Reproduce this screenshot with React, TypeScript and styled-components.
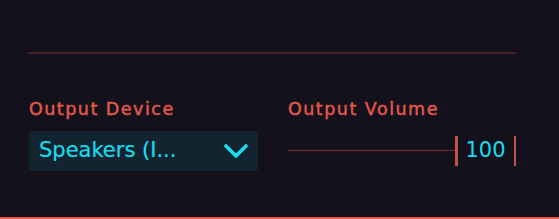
import styled, { createGlobalStyle } from 'styled-components';

const GlobalStyle = createGlobalStyle`
    html, body {
        margin: 0;
        padding: 0;
        background: #13121c;
    }
    body {
        font-family: 'DejaVu Sans', 'Open Sans', sans-serif;
    }
`
const Panel = styled.div`
    width: 559px;
    height: 219px;
    box-sizing: border-box;
    background: #13121c;
    border-bottom: 2px solid #e85a48;
    padding: 52px 43px 0 28px;
`
const Divider = styled.div`
    height: 1.5px;
    background: #4b1f26;
`
const Row = styled.div`
    display: grid;
    grid-template-columns: 229px 1fr;
    column-gap: 30px;
    margin-top: 42px;
    padding-left: 1px;
`
const Field = styled.div`
    display: flex;
    flex-direction: column;
    gap: 9px;
`
const Label = styled.div`
    font-size: 17.5px;
    font-weight: 400;
    color: #e5574a;
    line-height: 26px;
    letter-spacing: 1.5px;
    -webkit-text-stroke: 0.45px #e5574a;
`
const Select = styled.div`
    height: 40px;
    box-sizing: border-box;
    border-radius: 4px;
    background: #12242f;
    display: flex;
    align-items: center;
    justify-content: space-between;
    padding: 0 10px 0 10px;
    color: #19dcef;
    font-size: 21px;
`
const SelectText = styled.span`
    white-space: nowrap;
    line-height: 1;
    -webkit-text-stroke: 0.2px #19dcef;
`
const Slider = styled.div`
    height: 40px;
    display: flex;
    align-items: center;
`
const Track = styled.div`
    flex: 1;
    height: 1.5px;
    background: #7a2e2e;
`
const Bar = styled.div`
    width: 2.5px;
    height: 30px;
    background: #c8504a;
`
const Value = styled.div`
    width: 56px;
    text-align: center;
    color: #19dcef;
    font-size: 21px;
    line-height: 1;
`

function Chevron() {
    return (
        <svg width="24" height="16" viewBox="0 0 24 16">
            <path d="M2 3 L12 13 L22 3" fill="none" stroke="#19dcef" strokeWidth="3.6" strokeLinecap="round" strokeLinejoin="round"/>
        </svg>
    )
}

function App() {
    return (
        <>
            <GlobalStyle />
            <Panel>
                <Divider />
                <Row>
                    <Field>
                        <Label>Output Device</Label>
                        <Select>
                            <SelectText>Speakers (I...</SelectText>
                            <Chevron />
                        </Select>
                    </Field>
                    <Field>
                        <Label>Output Volume</Label>
                        <Slider>
                            <Track />
                            <Bar />
                            <Value>100</Value>
                            <Bar />
                        </Slider>
                    </Field>
                </Row>
            </Panel>
        </>
    )
}

export default App;
